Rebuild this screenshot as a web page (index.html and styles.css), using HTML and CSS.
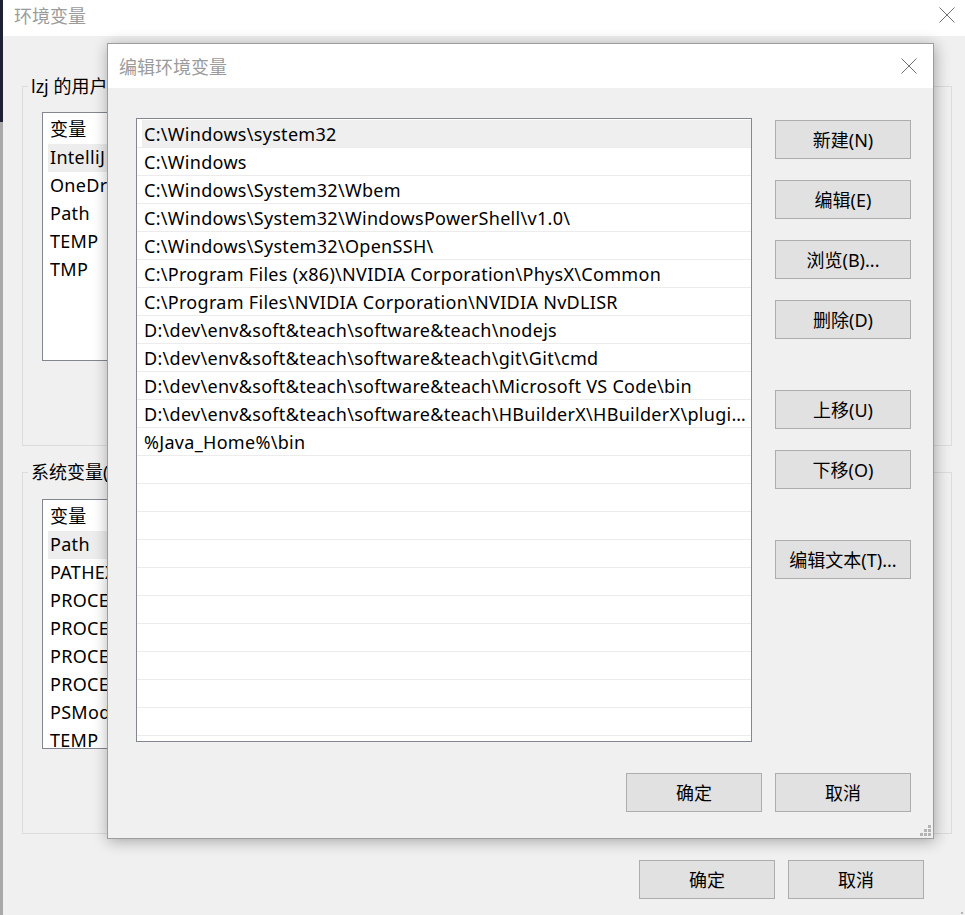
FILE: index.html
```html
<!DOCTYPE html>
<html lang="zh-CN">
<head>
<meta charset="utf-8">
<title>环境变量</title>
<link rel="stylesheet" href="styles.css">
</head>
<body>
<div class="screen">
  <div class="edge"></div>
  <div class="win">
    <div class="win-title">
      <span class="title">环境变量</span>
      <svg class="close" width="16" height="16" viewBox="0 0 16 16"><path d="M0.5 0.5L15.5 15.5M15.5 0.5L0.5 15.5" stroke="#707070" stroke-width="1" fill="none"/></svg>
    </div>
    <div class="win-body">
      <div class="group g1">
        <span class="legend">lzj 的用户变量(U)</span>
        <div class="vlist">
          <div class="vhead">变量</div>
          <div class="vrow sel">IntelliJ IDEA</div>
          <div class="vrow">OneDrive</div>
          <div class="vrow">Path</div>
          <div class="vrow">TEMP</div>
          <div class="vrow">TMP</div>
        </div>
      </div>
      <div class="group g2">
        <span class="legend">系统变量(S)</span>
        <div class="vlist">
          <div class="vhead">变量</div>
          <div class="vrow sel">Path</div>
          <div class="vrow">PATHEXT</div>
          <div class="vrow">PROCESSOR_ARCHITECTURE</div>
          <div class="vrow">PROCESSOR_IDENTIFIER</div>
          <div class="vrow">PROCESSOR_LEVEL</div>
          <div class="vrow">PROCESSOR_REVISION</div>
          <div class="vrow">PSModulePath</div>
          <div class="vrow">TEMP</div>
          <div class="vrow">TMP</div>
        </div>
      </div>
      <div class="actions win-actions">
        <button class="btn">确定</button>
        <button class="btn">取消</button>
      </div>
    </div>
    <svg class="grip grip-win" width="13" height="12" viewBox="0 0 13 12"><g fill="#b4b4b4"><rect x="9" y="0" width="2" height="2"/><rect x="5" y="4" width="2" height="2"/><rect x="9" y="4" width="2" height="2"/><rect x="1" y="8" width="2" height="2"/><rect x="5" y="8" width="2" height="2"/><rect x="9" y="8" width="2" height="2"/></g></svg>
  </div>

  <div class="dialog">
    <div class="dlg-title">
      <span class="title">编辑环境变量</span>
      <svg class="close" width="16" height="16" viewBox="0 0 16 16"><path d="M0.5 0.5L15.5 15.5M15.5 0.5L0.5 15.5" stroke="#707070" stroke-width="1" fill="none"/></svg>
    </div>
    <div class="dlg-body">
      <div class="dlg-main">
        <div class="plist">
          <div class="prow"><div class="cell sel">C:\Windows\system32</div></div>
          <div class="prow"><div class="cell">C:\Windows</div></div>
          <div class="prow"><div class="cell">C:\Windows\System32\Wbem</div></div>
          <div class="prow"><div class="cell">C:\Windows\System32\WindowsPowerShell\v1.0\</div></div>
          <div class="prow"><div class="cell">C:\Windows\System32\OpenSSH\</div></div>
          <div class="prow"><div class="cell">C:\Program Files (x86)\NVIDIA Corporation\PhysX\Common</div></div>
          <div class="prow"><div class="cell">C:\Program Files\NVIDIA Corporation\NVIDIA NvDLISR</div></div>
          <div class="prow"><div class="cell">D:\dev\env&amp;soft&amp;teach\software&amp;teach\nodejs</div></div>
          <div class="prow"><div class="cell">D:\dev\env&amp;soft&amp;teach\software&amp;teach\git\Git\cmd</div></div>
          <div class="prow"><div class="cell">D:\dev\env&amp;soft&amp;teach\software&amp;teach\Microsoft VS Code\bin</div></div>
          <div class="prow"><div class="cell">D:\dev\env&amp;soft&amp;teach\software&amp;teach\HBuilderX\HBuilderX\plugins\npm</div></div>
          <div class="prow"><div class="cell">%Java_Home%\bin</div></div>
          <div class="prow"><div class="cell"></div></div>
          <div class="prow"><div class="cell"></div></div>
          <div class="prow"><div class="cell"></div></div>
          <div class="prow"><div class="cell"></div></div>
          <div class="prow"><div class="cell"></div></div>
          <div class="prow"><div class="cell"></div></div>
          <div class="prow"><div class="cell"></div></div>
          <div class="prow"><div class="cell"></div></div>
          <div class="prow"><div class="cell"></div></div>
          <div class="prow"><div class="cell"></div></div>
          <div class="prow"><div class="cell"></div></div>
        </div>
        <div class="side">
          <button class="btn">新建(N)</button>
          <button class="btn">编辑(E)</button>
          <button class="btn">浏览(B)...</button>
          <button class="btn">删除(D)</button>
          <button class="btn sep">上移(U)</button>
          <button class="btn">下移(O)</button>
          <button class="btn sep">编辑文本(T)...</button>
        </div>
      </div>
      <div class="actions dlg-actions">
        <button class="btn">确定</button>
        <button class="btn">取消</button>
      </div>
    </div>
    <svg class="grip grip-dlg" width="13" height="12" viewBox="0 0 13 12"><g fill="#b4b4b4"><rect x="9" y="0" width="3" height="3"/><rect x="5" y="4" width="3" height="3"/><rect x="9" y="4" width="3" height="3"/><rect x="1" y="8" width="3" height="3"/><rect x="5" y="8" width="3" height="3"/><rect x="9" y="8" width="3" height="3"/></g></svg>
  </div>
</div>
</body>
</html>
```
FILE: styles.css
```css
* { box-sizing: border-box; }
html, body { margin: 0; padding: 0; }
body {
  font-family: "Noto Sans", "Noto Sans CJK SC", sans-serif;
  font-size: 18px;
  color: #000;
  background: #f0f0f0;
}
.screen {
  position: relative;
  width: 965px;
  height: 915px;
  overflow: hidden;
  display: flex;
}
.edge {
  width: 3px;
  flex: none;
  background: linear-gradient(#1c2232 0 122px, #a9a9a9 122px);
}
.win {
  position: relative;
  flex: 1;
  display: flex;
  flex-direction: column;
  background: #f0f0f0;
}
.win-title {
  height: 36px;
  background: #fff;
  display: flex;
  align-items: center;
  justify-content: space-between;
  padding: 0 10px 7px 11px;
}
.title {
  color: #9b9b9b;
  font-family: "Noto Sans CJK SC", sans-serif;
  font-size: 18px;
  line-height: 24px;
}
.close { display: block; }
.win-body {
  padding: 50px 0 0 19px;
  display: flex;
  flex-direction: column;
}
.group {
  width: 930px;
  border: 1px solid #dcdcdc;
  padding-left: 19px;
}
.g1 { height: 360px; }
.g2 { height: 362px; margin-top: 26px; }
.legend {
  display: block;
  width: fit-content;
  margin: -13px 0 0 -14px;
  padding: 0 3px;
  line-height: 24px;
  background: #f0f0f0;
  font-family: "Noto Sans", "Noto Sans CJK SC", sans-serif;
}
.vlist {
  width: 560px;
  height: 249px;
  margin-top: 14px;
  border: 1px solid #828790;
  background: #fff;
  padding-left: 5px;
  overflow: hidden;
  letter-spacing: 0.3px;
}
.g2 .vlist { height: 250px; margin-top: 15px; }
.vhead {
  height: 31px;
  line-height: 32px;
  padding-left: 2px;
}
.vrow {
  height: 28px;
  line-height: 27px;
  padding-left: 2px;
  white-space: nowrap;
}
.vrow.sel { background: #ededed; }

.actions {
  display: flex;
  justify-content: flex-end;
  gap: 13px;
}
.win-actions {
  margin-top: 26px;
  padding-right: 41px;
}
.btn {
  width: 136px;
  height: 39px;
  border: 1px solid #adadad;
  background: #e1e1e1;
  font-family: "Noto Sans", "Noto Sans CJK SC", sans-serif;
  font-size: 18px;
  color: #000;
  padding: 0;
  line-height: 36px;
  text-align: center;
}
.grip { position: absolute; display: block; }
.grip-win { right: 0; bottom: -9px; }

.dialog {
  position: absolute;
  left: 107px;
  top: 43px;
  width: 827px;
  height: 796px;
  border: 1px solid #9d9d9d;
  background: #f0f0f0;
  box-shadow: 1px 2px 14px rgba(0, 0, 0, 0.32);
  display: flex;
  flex-direction: column;
}
.dlg-title {
  height: 44px;
  flex: none;
  background: #fff;
  display: flex;
  align-items: center;
  justify-content: space-between;
  padding: 0 16px 1px 11px;
}
.dlg-body {
  flex: 1;
  padding: 30px 0 0 28px;
  display: flex;
  flex-direction: column;
}
.dlg-main {
  display: flex;
  gap: 23px;
}
.plist {
  width: 616px;
  height: 624px;
  border: 1px solid #828790;
  background: #fff;
  padding-top: 1px;
  overflow: hidden;
  letter-spacing: 0.3px;
}
.prow {
  height: 28px;
  border-bottom: 1px solid #ececec;
}
.cell {
  height: 27px;
  margin-left: 5px;
  padding: 0 5px 0 2px;
  line-height: 28px;
  white-space: nowrap;
  overflow: hidden;
  text-overflow: ellipsis;
}
.cell.sel { background: #efefef; }
.side {
  display: flex;
  flex-direction: column;
  gap: 21px;
  padding-top: 2px;
}
.side .sep { margin-top: 30px; }
.dlg-actions {
  margin-top: 31px;
  padding-right: 22px;
}
.grip-dlg { right: 1px; bottom: 1px; }
```
